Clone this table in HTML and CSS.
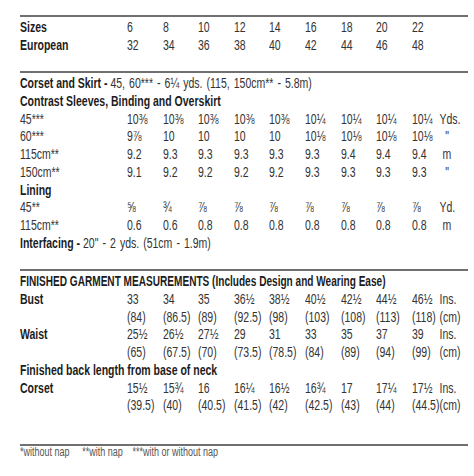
FILE: index.html
```html
<!DOCTYPE html>
<html>
<head>
<meta charset="utf-8">
<link rel="stylesheet" href="styles.css">
</head>
<body>
<div class="sheet">
  <section class="block">
    <div class="row"><b>Sizes</b><span>6</span><span>8</span><span>10</span><span>12</span><span>14</span><span>16</span><span>18</span><span>20</span><span>22</span><span></span></div>
    <div class="row"><b>European</b><span>32</span><span>34</span><span>36</span><span>38</span><span>40</span><span>42</span><span>44</span><span>46</span><span>48</span><span></span></div>
  </section>

  <section class="block">
    <div class="line"><span class="cond"><b>Corset and Skirt -</b> <span class="reg">45, 60*** - 6¼ yds. (115, 150cm** - 5.8m)</span></span></div>
    <div class="line"><span class="cond"><b>Contrast Sleeves, Binding and Overskirt</b></span></div>
    <div class="row"><span>45***</span><span>10⅜</span><span>10⅜</span><span>10⅜</span><span>10⅜</span><span>10⅜</span><span>10¼</span><span>10¼</span><span>10¼</span><span>10¼</span><span class="unit">Yds.</span></div>
    <div class="row"><span>60***</span><span>9⅞</span><span>10</span><span>10</span><span>10</span><span>10</span><span>10⅛</span><span>10⅛</span><span>10⅛</span><span>10⅛</span><span class="unit">"</span></div>
    <div class="row"><span>115cm**</span><span>9.2</span><span>9.3</span><span>9.3</span><span>9.3</span><span>9.3</span><span>9.3</span><span>9.4</span><span>9.4</span><span>9.4</span><span class="unit">m</span></div>
    <div class="row"><span>150cm**</span><span>9.1</span><span>9.2</span><span>9.2</span><span>9.2</span><span>9.2</span><span>9.3</span><span>9.3</span><span>9.3</span><span>9.3</span><span class="unit">"</span></div>
    <div class="line"><span class="cond"><b>Lining</b></span></div>
    <div class="row"><span>45**</span><span>⅝</span><span>¾</span><span>⅞</span><span>⅞</span><span>⅞</span><span>⅞</span><span>⅞</span><span>⅞</span><span>⅞</span><span class="unit">Yd.</span></div>
    <div class="row"><span>115cm**</span><span>0.6</span><span>0.6</span><span>0.8</span><span>0.8</span><span>0.8</span><span>0.8</span><span>0.8</span><span>0.8</span><span>0.8</span><span class="unit">m</span></div>
    <div class="line"><span class="cond"><b>Interfacing -</b> <span class="reg">20" - 2 yds. (51cm - 1.9m)</span></span></div>
  </section>

  <section class="block block-tall">
    <div class="line"><span class="cond cond-tight"><b>FINISHED GARMENT MEASUREMENTS (Includes Design and Wearing Ease)</b></span></div>
    <div class="row"><b>Bust</b><span>33</span><span>34</span><span>35</span><span>36½</span><span>38½</span><span>40½</span><span>42½</span><span>44½</span><span>46½</span><span class="unit">Ins.</span></div>
    <div class="row"><span></span><span>(84)</span><span>(86.5)</span><span>(89)</span><span>(92.5)</span><span>(98)</span><span>(103)</span><span>(108)</span><span>(113)</span><span>(118)</span><span class="unit">(cm)</span></div>
    <div class="row"><b>Waist</b><span>25½</span><span>26½</span><span>27½</span><span>29</span><span>31</span><span>33</span><span>35</span><span>37</span><span>39</span><span class="unit">Ins.</span></div>
    <div class="row"><span></span><span>(65)</span><span>(67.5)</span><span>(70)</span><span>(73.5)</span><span>(78.5)</span><span>(84)</span><span>(89)</span><span>(94)</span><span>(99)</span><span class="unit">(cm)</span></div>
    <div class="line"><span class="cond"><b>Finished back length from base of neck</b></span></div>
    <div class="row"><b>Corset</b><span>15½</span><span>15¾</span><span>16</span><span>16¼</span><span>16½</span><span>16¾</span><span>17</span><span>17¼</span><span>17½</span><span class="unit">Ins.</span></div>
    <div class="row"><span></span><span>(39.5)</span><span>(40)</span><span>(40.5)</span><span>(41.5)</span><span>(42)</span><span>(42.5)</span><span>(43)</span><span>(44)</span><span>(44.5)</span><span class="unit">(cm)</span></div>
  </section>

  <section class="notes">
    <span class="cond"><span class="note note-1">*without nap</span><span class="note note-2">**with nap</span><span>***with or without nap</span></span>
  </section>
</div>
</body>
</html>
```
FILE: styles.css
```css
html, body {
  margin: 0;
  padding: 0;
  background: #ffffff;
}
body {
  font-family: "Liberation Sans", Arial, sans-serif;
  font-size: 14px;
  color: #333333;
}
.sheet {
  width: 448px;
  margin-left: 20px;
  padding-top: 15px;
  overflow: hidden;
}
.block {
  border-top: 2px solid #707070;
  padding-top: 2px;
  margin-bottom: 16.5px;
}
.block-tall {
  margin-bottom: 29px;
}
.row {
  display: grid;
  grid-template-columns: 107px repeat(8, 35.6px) 25.2px 20px;
  line-height: 17.75px;
  height: 17.75px;
  white-space: nowrap;
}
.row > span, .row > b {
  display: block;
  transform: scaleX(0.75);
  transform-origin: left center;
}
.row > .unit {
  text-align: center;
  transform-origin: center center;
}
.line {
  line-height: 17.75px;
  height: 17.75px;
  white-space: nowrap;
  overflow: hidden;
}
.cond {
  display: inline-block;
  transform: scaleX(0.75);
  transform-origin: left center;
}
.cond-tight {
  transform: scaleX(0.72);
}
.reg {
  word-spacing: 1.5px;
}
b {
  font-weight: bold;
  color: #1c1c1c;
}
.notes {
  border-top: 2px solid #707070;
  font-size: 12px;
  line-height: 12px;
  color: #555555;
  white-space: nowrap;
  overflow: hidden;
}
.note-1 {
  margin-right: 17px;
}
.note-2 {
  margin-right: 13px;
}
```
